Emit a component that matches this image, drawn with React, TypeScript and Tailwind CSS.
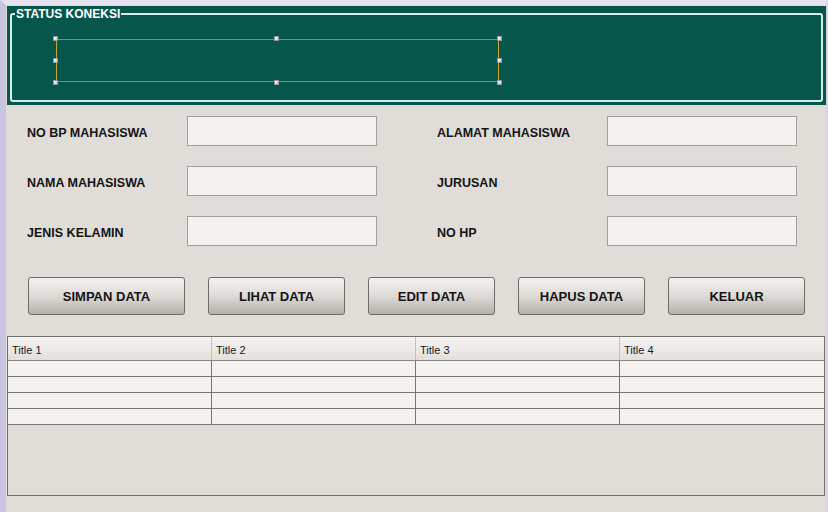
import React from 'react';

const leftFields = ['NO BP MAHASISWA', 'NAMA MAHASISWA', 'JENIS KELAMIN'];
const rightFields = ['ALAMAT MAHASISWA', 'JURUSAN', 'NO HP'];

const buttons = [
  { label: 'SIMPAN DATA', width: 'w-[157px]' },
  { label: 'LIHAT DATA', width: 'w-[137px]' },
  { label: 'EDIT DATA', width: 'w-[127px]' },
  { label: 'HAPUS DATA', width: 'w-[127px]' },
  { label: 'KELUAR', width: 'w-[137px]' },
];

const titles = ['Title 1', 'Title 2', 'Title 3', 'Title 4'];

function Handle({ className }: { className: string }) {
  return (
    <span
      className={`absolute h-[5px] w-[5px] border border-[#8d9a98] bg-gradient-to-br from-white to-[#c9cfce] ${className}`}
    />
  );
}

function Field({ label, labelWidth }: { label: string; labelWidth: string }) {
  return (
    <div className="flex items-center">
      <div className={`${labelWidth} pt-[5px] text-[12.5px] font-bold text-[#141414]`}>{label}</div>
      <div className="h-[30px] w-[190px] border border-[#a29d99] bg-[#f4f2f0]" />
    </div>
  );
}

export default function App() {
  return (
    <div
      className="flex h-[512px] w-[828px] flex-col overflow-hidden border-l-[6px] border-t-[5px] border-r-[2px] border-l-[#c8c4e2] border-t-[#e6e2f0] border-r-[#d6d2ea] bg-[#e0dcd8]"
      style={{ fontFamily: '"Liberation Sans", Arial, sans-serif' }}
    >
      {/* status koneksi panel */}
      <div className="ml-px mt-px h-[99px] bg-[#06564c] px-[3px] pb-[3px] pt-[7px]">
        <div className="relative h-full rounded-[3px] border-2 border-[#d4efe9] pl-[44px] pt-[24px]">
          <span className="absolute -top-[8px] left-[3px] bg-[#06564c] px-px text-[12px] font-bold leading-[14px] text-white">
            STATUS KONEKSI
          </span>
          <div className="relative h-[43px] w-[443px] border-x border-x-[#c9a62c] border-y border-y-[#a8871c]">
            <Handle className="-left-[4px] -top-[4px]" />
            <Handle className="left-[217px] -top-[4px]" />
            <Handle className="-right-[4px] -top-[4px]" />
            <Handle className="-left-[4px] top-[18px]" />
            <Handle className="-right-[4px] top-[18px]" />
            <Handle className="-bottom-[4px] -left-[4px]" />
            <Handle className="-bottom-[4px] left-[217px]" />
            <Handle className="-bottom-[4px] -right-[4px]" />
          </div>
        </div>
      </div>

      {/* form */}
      <div className="ml-[21px] mt-[11px] flex gap-[60px]">
        <div className="flex flex-col gap-[20px]">
          {leftFields.map((f) => (
            <Field key={f} label={f} labelWidth="w-[160px]" />
          ))}
        </div>
        <div className="flex flex-col gap-[20px]">
          {rightFields.map((f) => (
            <Field key={f} label={f} labelWidth="w-[170px]" />
          ))}
        </div>
      </div>

      {/* buttons */}
      <div className="ml-[22px] mt-[31px] flex gap-[23px]">
        {buttons.map((b) => (
          <div
            key={b.label}
            className={`${b.width} flex h-[38px] items-center justify-center rounded-[3px] border border-[#6f6b67] bg-gradient-to-b from-[#f3f1ef] via-[#dedad6] to-[#b4afaa] pt-px text-[13px] font-bold text-[#141414]`}
          >
            {b.label}
          </div>
        ))}
      </div>

      {/* table */}
      <div className="ml-px mr-px mt-[21px] flex h-[160px] flex-col border border-[#75706c] bg-[#e0dcd8]">
        <div className="grid h-[24px] grid-cols-4 border-b border-[#8a8581] bg-gradient-to-b from-[#f6f4f2] to-[#e2dfdc]">
          {titles.map((t, i) => (
            <div
              key={t}
              className={`flex items-center pl-[4px] pt-[3px] text-[11px] text-[#1a1a1a] ${i < 3 ? 'border-r border-[#c2bdb9]' : ''}`}
            >
              {t}
            </div>
          ))}
        </div>
        {[0, 1, 2, 3].map((r) => (
          <div key={r} className="grid h-[16px] grid-cols-4 border-b border-[#7a7572] bg-[#f4f2ef]">
            {titles.map((t, i) => (
              <div key={t} className={i < 3 ? 'border-r border-[#7a7572]' : ''} />
            ))}
          </div>
        ))}
      </div>
    </div>
  );
}
